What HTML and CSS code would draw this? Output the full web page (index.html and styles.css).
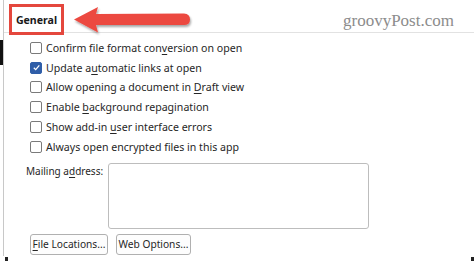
FILE: index.html
```html
<!DOCTYPE html>
<html lang="en">
<head>
    <meta charset="UTF-8">
    <title>Word Options - General</title>
    <link rel="stylesheet" href="styles.css">
</head>
<body>
    <div class="edge-mark"></div>

    <div class="panel">
        <div class="header">
            <div class="tab">General</div>
            <svg class="arrow" width="124" height="34" viewBox="0 0 124 34">
                <defs>
                    <filter id="shadow" x="-10%" y="-30%" width="130%" height="170%">
                        <feDropShadow dx="1" dy="2" stdDeviation="1.2" flood-color="#000" flood-opacity="0.35"/>
                    </filter>
                </defs>
                <path d="M2 15.5 L26 3 L24 10 L112 9.5 Q118 10 118 15.5 Q118 21 112 21 L24 21 L26 28.5 Z" fill="#ec4a40" filter="url(#shadow)"/>
            </svg>
            <div class="watermark">groovyPost.com</div>
        </div>

        <ul class="options">
            <li><span class="box"></span><span>Confirm file format con<u>v</u>ersion on open</span></li>
            <li><span class="box checked"><svg width="9" height="9" viewBox="0 0 9 9"><path d="M1.8 4.8 L3.7 6.6 L7.3 2.4" fill="none" stroke="#fff" stroke-width="1.3"/></svg></span><span>Update a<u>u</u>tomatic links at open</span></li>
            <li><span class="box"></span><span>Allow opening a document in <u>D</u>raft view</span></li>
            <li><span class="box"></span><span>Enable <u>b</u>ackground repagination</span></li>
            <li><span class="box"></span><span>Show add-in <u>u</u>ser interface errors</span></li>
            <li><span class="box"></span><span>Always open encrypted files in this app</span></li>
        </ul>

        <div class="address">
            <label>Mailing a<u>d</u>dress:</label>
            <div class="textarea"></div>
        </div>

        <div class="buttons">
            <button class="btn-files"><u>F</u>ile Locations...</button>
            <button class="btn-web">Web Options...</button>
        </div>
    </div>

    <div class="corner corner-left"></div>
    <div class="corner corner-right"></div>
</body>
</html>
```

FILE: styles.css
```css
* {
    margin: 0;
    padding: 0;
    box-sizing: border-box;
}

body {
    width: 474px;
    height: 261px;
    background-color: #fff;
    font-family: "Noto Sans", "Open Sans", sans-serif;
    font-size: 10.6px;
    color: #262626;
    position: relative;
    overflow: hidden;
}

.panel {
    margin-left: 3px;
    height: 256px;
    border-left: 1px solid #c8c8c8;
}

.header {
    position: relative;
    height: 33px;
    border-bottom: 1px solid #e2e2e2;
}

.tab {
    position: absolute;
    left: 5px;
    top: 4px;
    width: 55px;
    height: 31px;
    border: 3px solid #e4473d;
    background-color: #fff;
    font-weight: bold;
    font-size: 10.6px;
    color: #1a1a1a;
    display: flex;
    align-items: center;
    justify-content: center;
}

.arrow {
    position: absolute;
    left: 68px;
    top: 4px;
}

.watermark {
    position: absolute;
    left: 339px;
    top: 11px;
    font-family: "Liberation Serif", serif;
    font-size: 17px;
    color: #8c8c8c;
}

.options {
    list-style: none;
    padding: 5px 0 0 26px;
}

.options li {
    display: flex;
    align-items: center;
    height: 19.8px;
    white-space: nowrap;
}

.box {
    width: 12px;
    height: 12px;
    border: 1px solid #7a7a7a;
    border-radius: 2px;
    margin-right: 4px;
    flex-shrink: 0;
    display: flex;
    align-items: center;
    justify-content: center;
}

.box.checked {
    background-color: #2f5ea8;
    border-color: #2f5ea8;
}

u {
    text-decoration-thickness: 1px;
    text-underline-offset: 2px;
}

.address {
    display: flex;
    padding: 6px 0 0 22px;
}

.address label {
    width: 82px;
    padding-top: 1px;
    font-size: 10px;
    white-space: nowrap;
}

.textarea {
    width: 261px;
    height: 66px;
    border: 1px solid #bdbdbd;
    border-radius: 3px;
}

.buttons {
    display: flex;
    gap: 8px;
    padding: 5px 0 0 26px;
}

button {
    font-family: inherit;
    font-size: 10.2px;
    color: #262626;
    background-color: #fdfdfd;
    border: 1px solid #b0b0b0;
    border-radius: 3px;
    height: 21px;
    padding: 0;
    white-space: nowrap;
}

.btn-files {
    width: 78px;
}

.btn-web {
    width: 75px;
}

.edge-mark {
    position: absolute;
    left: 0;
    top: 40px;
    width: 3px;
    height: 25px;
    background-color: #111;
}

.corner {
    position: absolute;
    bottom: 0;
    width: 3px;
    height: 4px;
    background-color: #222;
}

.corner-left {
    left: 5px;
}

.corner-right {
    right: 0;
}
```
